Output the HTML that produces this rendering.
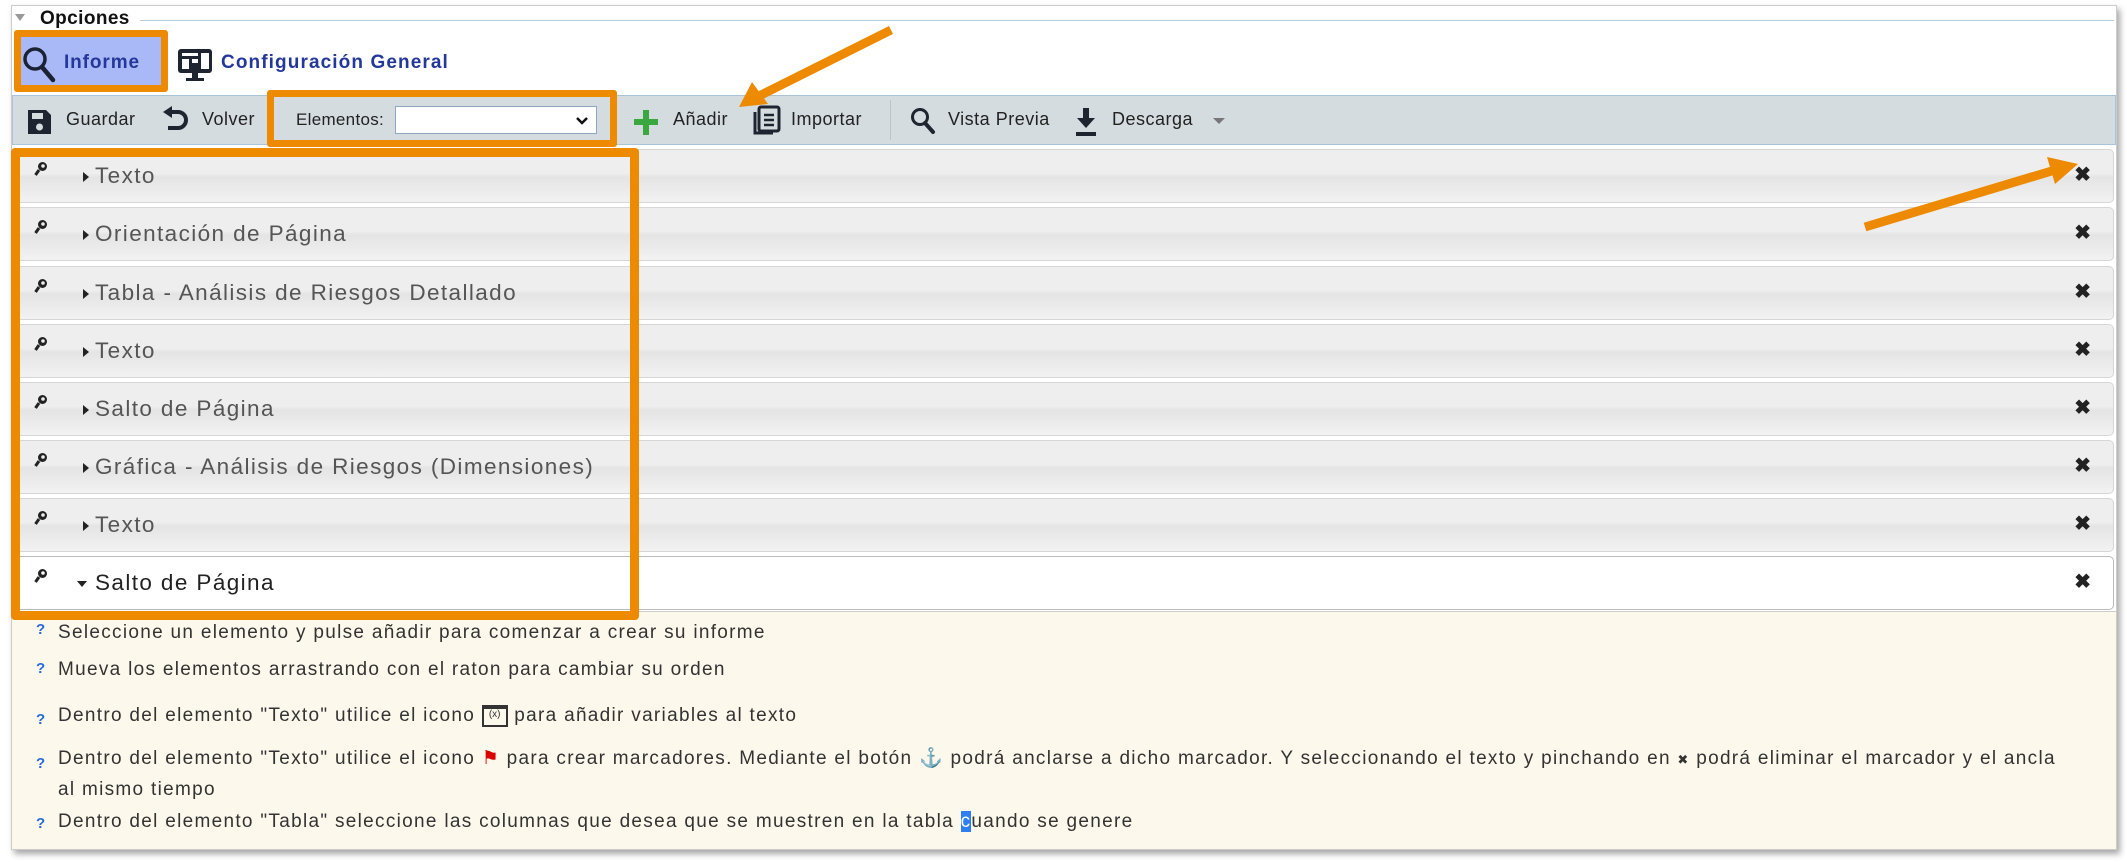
<!DOCTYPE html>
<html><head><meta charset="utf-8"><style>
*{margin:0;padding:0;box-sizing:border-box}
body{width:2127px;height:862px;background:#fff;font-family:"Liberation Sans",sans-serif;position:relative;overflow:hidden}
.abs{position:absolute}
.panel{left:11px;top:5px;width:2106px;height:845px;border:1px solid #ccc;box-shadow:3px 4px 6px rgba(0,0,0,.35);background:#fff}
.tb{left:12px;top:95px;width:2104px;height:50px;background:#d4dcdf;border:1px solid #a9c3d8}
.ti{top:109px;font-size:18px;color:#222;letter-spacing:0.5px}
.row{left:16px;width:2098px;height:54px;border:1px solid #d6d6d6;border-radius:5px;background:linear-gradient(#eeeeee 0,#eeeeee 45%,#e4e4e4 52%,#f2f2f2 100%)}
.rt{position:absolute;left:78px;top:13px;font-size:22.5px;color:#555;letter-spacing:1.4px}
.tri{position:absolute;left:66px;top:22px;width:0;height:0;border-left:6px solid #222;border-top:5px solid transparent;border-bottom:5px solid transparent}
.key{position:absolute;left:17px;top:11px;width:14px;height:15px}
.x{position:absolute;right:22px;top:12px;font-size:20px;font-weight:bold;color:#222}
.help{left:12px;top:611px;width:2104px;height:238px;background:#fcf9ec;border-top:1px solid #ccc}
.hl{position:absolute;left:46px;font-size:19px;color:#333;letter-spacing:1.3px}
.q{position:absolute;left:24px;font-size:15px;font-weight:bold;color:#2a6ad8}
</style></head><body>
<div class="abs panel"></div>
<div class="abs" style="left:15px;top:14px;width:0;height:0;border-top:7px solid #999;border-left:5px solid transparent;border-right:5px solid transparent"></div>
<div class="abs" style="left:40px;top:8px;font-size:19px;font-weight:bold;color:#111;letter-spacing:0.4px">Opciones</div>
<div class="abs" style="left:140px;top:20px;width:1974px;height:1px;background:#b6cde0"></div>
<div class="abs" style="left:14px;top:30px;width:154px;height:62px;border:7px solid #ee8a00;border-radius:3px;background:#a9b8f7"></div>
<svg class="abs" style="left:22px;top:46px" width="34" height="38" viewBox="0 0 34 38"><circle cx="13" cy="13" r="10" fill="none" stroke="#1a2233" stroke-width="3.5"/><path d="M20 21 L31 34" stroke="#1a2233" stroke-width="4.5" stroke-linecap="round"/></svg>
<div class="abs" style="left:64px;top:52px;font-size:19px;font-weight:bold;color:#23389a;letter-spacing:0.9px">Informe</div>
<svg class="abs" style="left:177px;top:48px" width="36" height="34" viewBox="0 0 36 34"><rect x="1" y="1" width="34" height="24" rx="3" fill="#1e2530"/><rect x="5" y="5" width="16" height="3" fill="#fff"/><rect x="5" y="11" width="7" height="10" fill="#fff"/><rect x="15" y="11" width="6" height="4" fill="#fff"/><rect x="24" y="5" width="8" height="16" fill="#fff"/><path d="M15 25h6v5h6v3H9v-3h6z" fill="#1e2530"/></svg>
<div class="abs" style="left:221px;top:52px;font-size:19px;font-weight:bold;color:#23389a;letter-spacing:1.1px">Configuración General</div>
<div class="abs tb"></div>
<svg class="abs" style="left:26px;top:108px" width="26" height="28" viewBox="0 0 26 28"><path d="M2 2h18l5 5v19H2z" fill="#1e2530"/><rect x="6" y="5" width="11" height="6" fill="#d4dcdf"/><circle cx="13.5" cy="19" r="3.5" fill="#d4dcdf"/></svg>
<div class="abs ti" style="left:66px">Guardar</div>
<svg class="abs" style="left:161px;top:106px" width="28" height="30" viewBox="0 0 28 30"><path d="M9 6h8a8 8 0 0 1 0 16H7" fill="none" stroke="#1e2530" stroke-width="4"/><path d="M2 6l9-6v12z" fill="#1e2530"/></svg>
<div class="abs ti" style="left:202px">Volver</div>
<div class="abs" style="left:267px;top:90px;width:350px;height:57px;border:7px solid #ee8a00;border-radius:3px"></div>
<div class="abs ti" style="left:296px;top:110px;font-size:17px;letter-spacing:0.3px">Elementos:</div>
<div class="abs" style="left:395px;top:106px;width:202px;height:28px;background:#fff;border:1px solid #8fa5c0"></div>
<svg class="abs" style="left:575px;top:116px" width="14" height="10" viewBox="0 0 14 10"><path d="M2 2l5 5 5-5" fill="none" stroke="#111" stroke-width="2.5"/></svg>
<svg class="abs" style="left:633px;top:108px" width="26" height="28" viewBox="0 0 26 28"><path d="M10 2h6v9h9v6h-9v10h-6V17H1v-6h9z" fill="#3aa83e"/></svg>
<div class="abs ti" style="left:673px">Añadir</div>
<svg class="abs" style="left:753px;top:105px" width="28" height="30" viewBox="0 0 28 30"><rect x="6" y="2" width="20" height="24" rx="2" fill="none" stroke="#1e2530" stroke-width="3"/><path d="M2 7v21h18" fill="none" stroke="#1e2530" stroke-width="3"/><path d="M11 10h10M11 15h10M11 20h10" stroke="#1e2530" stroke-width="2.5"/></svg>
<div class="abs ti" style="left:791px">Importar</div>
<div class="abs" style="left:890px;top:100px;width:1px;height:40px;background:#b8c6cc"></div>
<svg class="abs" style="left:910px;top:107px" width="26" height="28" viewBox="0 0 26 28"><circle cx="10" cy="10" r="7.5" fill="none" stroke="#1e2530" stroke-width="3"/><path d="M15 16l8 9" stroke="#1e2530" stroke-width="4" stroke-linecap="round"/></svg>
<div class="abs ti" style="left:948px">Vista Previa</div>
<svg class="abs" style="left:1075px;top:107px" width="22" height="30" viewBox="0 0 22 30"><path d="M8 1h6v10h6l-9 10-9-10h6z" fill="#1e2530"/><rect x="1" y="25" width="20" height="4" fill="#1e2530"/></svg>
<div class="abs ti" style="left:1112px">Descarga</div>
<div class="abs" style="left:1213px;top:118px;width:0;height:0;border-top:6px solid #777;border-left:6px solid transparent;border-right:6px solid transparent"></div>
<!-- rows -->
<div class="abs row" style="top:149px"><svg class="key" viewBox="0 0 14 15"><circle cx="8.5" cy="5.5" r="4.5" fill="#222"/><circle cx="9" cy="5" r="1.8" fill="#eee"/><path d="M5 9L1.5 14" stroke="#222" stroke-width="3"/></svg><div class="tri"></div><div class="rt">Texto</div><div class="x">✖</div></div>
<div class="abs row" style="top:207px"><svg class="key" viewBox="0 0 14 15"><circle cx="8.5" cy="5.5" r="4.5" fill="#222"/><circle cx="9" cy="5" r="1.8" fill="#eee"/><path d="M5 9L1.5 14" stroke="#222" stroke-width="3"/></svg><div class="tri"></div><div class="rt">Orientación de Página</div><div class="x">✖</div></div>
<div class="abs row" style="top:266px"><svg class="key" viewBox="0 0 14 15"><circle cx="8.5" cy="5.5" r="4.5" fill="#222"/><circle cx="9" cy="5" r="1.8" fill="#eee"/><path d="M5 9L1.5 14" stroke="#222" stroke-width="3"/></svg><div class="tri"></div><div class="rt">Tabla - Análisis de Riesgos Detallado</div><div class="x">✖</div></div>
<div class="abs row" style="top:324px"><svg class="key" viewBox="0 0 14 15"><circle cx="8.5" cy="5.5" r="4.5" fill="#222"/><circle cx="9" cy="5" r="1.8" fill="#eee"/><path d="M5 9L1.5 14" stroke="#222" stroke-width="3"/></svg><div class="tri"></div><div class="rt">Texto</div><div class="x">✖</div></div>
<div class="abs row" style="top:382px"><svg class="key" viewBox="0 0 14 15"><circle cx="8.5" cy="5.5" r="4.5" fill="#222"/><circle cx="9" cy="5" r="1.8" fill="#eee"/><path d="M5 9L1.5 14" stroke="#222" stroke-width="3"/></svg><div class="tri"></div><div class="rt">Salto de Página</div><div class="x">✖</div></div>
<div class="abs row" style="top:440px"><svg class="key" viewBox="0 0 14 15"><circle cx="8.5" cy="5.5" r="4.5" fill="#222"/><circle cx="9" cy="5" r="1.8" fill="#eee"/><path d="M5 9L1.5 14" stroke="#222" stroke-width="3"/></svg><div class="tri"></div><div class="rt">Gráfica - Análisis de Riesgos (Dimensiones)</div><div class="x">✖</div></div>
<div class="abs row" style="top:498px"><svg class="key" viewBox="0 0 14 15"><circle cx="8.5" cy="5.5" r="4.5" fill="#222"/><circle cx="9" cy="5" r="1.8" fill="#eee"/><path d="M5 9L1.5 14" stroke="#222" stroke-width="3"/></svg><div class="tri"></div><div class="rt">Texto</div><div class="x">✖</div></div>
<div class="abs row" style="top:556px;background:#fff;border-color:#bbb"><svg class="key" viewBox="0 0 14 15"><circle cx="8.5" cy="5.5" r="4.5" fill="#222"/><circle cx="9" cy="5" r="1.8" fill="#fff"/><path d="M5 9L1.5 14" stroke="#222" stroke-width="3"/></svg><div class="tri" style="left:60px;top:24px;border-top:6px solid #222;border-left:5px solid transparent;border-right:5px solid transparent;border-bottom:0"></div><div class="rt" style="color:#222">Salto de Página</div><div class="x">✖</div></div>
<!-- help -->
<div class="abs help">
<div class="q" style="top:9px">?</div><div class="hl" style="top:10px">Seleccione un elemento y pulse añadir para comenzar a crear su informe</div>
<div class="q" style="top:48px">?</div><div class="hl" style="top:47px">Mueva los elementos arrastrando con el raton para cambiar su orden</div>
<div class="q" style="top:99px">?</div><div class="hl" style="top:93px">Dentro del elemento "Texto" utilice el icono <span style="display:inline-block;width:26px;height:22px;border:2px solid #333;border-top-width:4px;font-size:10px;text-align:center;vertical-align:4px;letter-spacing:0">(x)</span> para añadir variables al texto</div>
<div class="q" style="top:143px">?</div><div class="hl" style="top:132px;line-height:30px">Dentro del elemento "Texto" utilice el icono <span style="color:#d00">&#9873;</span> para crear marcadores. Mediante el botón &#9875; podrá anclarse a dicho marcador. Y seleccionando el texto y pinchando en <span style="font-size:13px">&#10006;</span> podrá eliminar el marcador y el ancla<br>al mismo tiempo</div>
<div class="q" style="top:203px">?</div><div class="hl" style="top:199px">Dentro del elemento "Tabla" seleccione las columnas que desea que se muestren en la tabla <span style="background:#2d7ef0;color:#fff">c</span>uando se genere</div>
</div>
<div class="abs" style="left:11px;top:148px;width:628px;height:472px;border:9px solid #ee8a00;border-radius:4px"></div>
<svg class="abs" style="left:0;top:0" width="2127" height="862">
<path d="M891 30 L757 97" stroke="#ee8a00" stroke-width="9"/>
<path d="M739 107 L752 82 L768 104 Z" fill="#ee8a00"/>
<path d="M1865 227 L2055 170" stroke="#ee8a00" stroke-width="9"/>
<path d="M2078 164 L2047 157 L2055 184 Z" fill="#ee8a00"/>
</svg>
</body></html>
